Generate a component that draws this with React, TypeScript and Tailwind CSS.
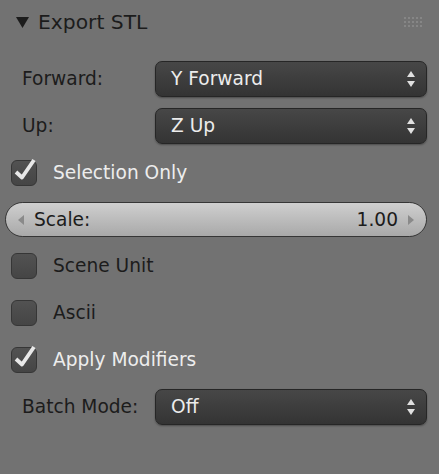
const font = { fontFamily: '"DejaVu Sans", "Liberation Sans", sans-serif' };

const Arrows = () => (
  <svg width="10" height="20" viewBox="0 0 10 20" className="shrink-0">
    <path d="M5 2 L9 8 L1 8 Z" fill="#e0e0e0" />
    <path d="M5 18 L9 12 L1 12 Z" fill="#e0e0e0" />
  </svg>
);

const Dropdown = ({ label, value }: { label: string; value: string }) => (
  <div className="flex items-center h-[36px]">
    <div className="w-[155px] pl-[22px] text-[18.6px] text-[#1c1c1c]">{label}</div>
    <div className="w-[272px] h-[36px] rounded-[7px] border border-[#262626] bg-gradient-to-b from-[#474747] to-[#343434] shadow-[0_1px_2px_rgba(0,0,0,0.35)] flex items-center pl-[15px] pr-[10px]">
      <span className="flex-1 text-[18.6px] text-[#ececec]">{value}</span>
      <Arrows />
    </div>
  </div>
);

const Check = ({ label, checked }: { label: string; checked?: boolean }) => (
  <div className="flex items-center h-[36px] pl-[11px]">
    <div className="relative w-[26px] h-[26px] rounded-[6px] border border-[#363636] bg-gradient-to-b from-[#525252] to-[#454545]">
      {checked && (
        <svg width="26" height="30" viewBox="0 0 26 30" className="absolute left-[0px] top-[-6px]">
          <path d="M4 17 L10 22.5 L22 5" stroke="#e8e8e8" strokeWidth="3.8" fill="none" strokeLinejoin="round" />
        </svg>
      )}
    </div>
    <span className={`ml-[16px] text-[18.6px] ${checked ? 'text-[#ededed]' : 'text-[#1c1c1c]'}`}>{label}</span>
  </div>
);

export default function App() {
  return (
    <div className="w-[439px] h-[474px] bg-[#727272] overflow-hidden" style={font}>
      <div className="h-[44px] flex items-center pl-[16px] pr-[17px]">
        <svg width="13" height="12" viewBox="0 0 13 12">
          <path d="M0 1 L13 1 L6.5 12 Z" fill="#1c1c1c" />
        </svg>
        <span className="ml-[9px] text-[20.3px] text-[#1c1c1c] flex-1">Export STL</span>
        <div className="grid grid-cols-5 gap-[2px] opacity-50">
          {Array.from({ length: 15 }).map((_, i) => (
            <div key={i} className="w-[2px] h-[2px] bg-[#9a9a9a]" />
          ))}
        </div>
      </div>
      <div className="mt-[17px] flex flex-col gap-[11px]">
        <Dropdown label="Forward:" value="Y Forward" />
        <Dropdown label="Up:" value="Z Up" />
        <Check label="Selection Only" checked />
        <div className="ml-[5px] w-[422px] h-[35px] rounded-full border-[1.5px] border-[#363636] bg-gradient-to-b from-[#cfcfcf] to-[#a9a9a9] flex items-center px-[12px]">
          <svg width="6" height="10" viewBox="0 0 6 10"><path d="M6 0 L0 5 L6 10 Z" fill="#8a8a8a" /></svg>
          <span className="ml-[10px] flex-1 text-[18.6px] text-[#1c1c1c]">Scale:</span>
          <span className="text-[18.6px] text-[#1c1c1c]">1.00</span>
          <svg width="6" height="10" viewBox="0 0 6 10" className="ml-[10px]"><path d="M0 0 L6 5 L0 10 Z" fill="#8a8a8a" /></svg>
        </div>
        <Check label="Scene Unit" />
        <Check label="Ascii" />
        <Check label="Apply Modifiers" checked />
        <Dropdown label="Batch Mode:" value="Off" />
      </div>
    </div>
  );
}
